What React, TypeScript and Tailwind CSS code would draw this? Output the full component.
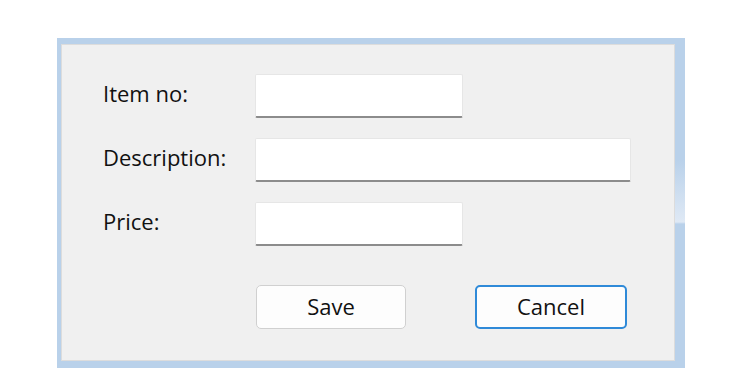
import React from 'react';

const font = { fontFamily: '"Open Sans", "Noto Sans", sans-serif' };

function Field({ wide }: { wide?: boolean }) {
  return (
    <div
      className={`h-[44px] ${wide ? 'w-[376px]' : 'w-[208px]'} rounded-[2px] border border-[#e6e6e6] border-b-2 border-b-[#8c8c8c] bg-white`}
    />
  );
}

export default function App() {
  const rows: { label: string; wide?: boolean }[] = [
    { label: 'Item no:' },
    { label: 'Description:', wide: true },
    { label: 'Price:' },
  ];

  return (
    <div className="w-[732px] h-[392px] bg-white pl-[57px] pt-[38px]" style={font}>
      <div className="w-[628px] h-[330px] bg-[#b9d1ea] pt-[6px] pb-[7px] pl-[4px] flex">
        <div className="flex-1 bg-[#f0f0f0] border border-[#dcdcdc] pl-[41px] pt-[29px]">
          <div className="grid grid-cols-[152px_auto] gap-y-5 items-center">
            {rows.map((r) => (
              <React.Fragment key={r.label}>
                <span className="text-[22px] text-[#111] leading-none -mt-[7px]">{r.label}</span>
                <Field wide={r.wide} />
              </React.Fragment>
            ))}
          </div>
          <div className="flex gap-[69px] mt-[39px] ml-[153px]">
            <button className="w-[150px] h-[44px] rounded-[5px] bg-[#fdfdfd] border border-[#d0d0d0] text-[22px] text-[#111] leading-none pb-[3px]">
              Save
            </button>
            <button className="w-[152px] h-[44px] rounded-[5px] bg-[#fdfdfd] border-2 border-[#2f8ad8] text-[22px] text-[#111] leading-none pb-[3px]">
              Cancel
            </button>
          </div>
        </div>
        <div className="w-[10px] bg-[linear-gradient(to_bottom,#b9d1ea_116px,#dfe9f5_178px,#b9d1ea_180px)]" />
      </div>
    </div>
  );
}
